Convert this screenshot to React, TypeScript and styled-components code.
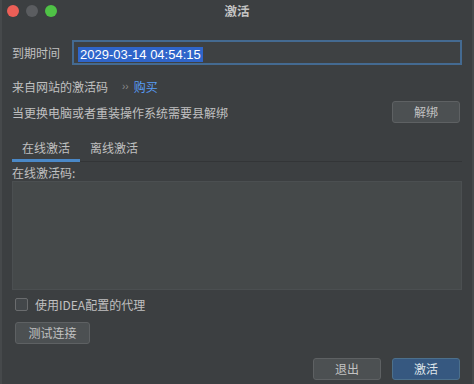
import React from "react";
import styled, { createGlobalStyle } from "styled-components";

const Global = createGlobalStyle`
  html, body { margin: 0; padding: 0; background: #3c3f41; }
  body {
    font-family: "Liberation Sans", "Noto Sans CJK SC", sans-serif;
    -webkit-font-smoothing: antialiased;
  }
  * { box-sizing: border-box; }
`;

const Window = styled.div`
  width: 474px;
  height: 384px;
  background: #3c3f41;
  border-left: 2px solid #46494b;
  border-right: 2px solid #46494b;
  display: flex;
  flex-direction: column;
  color: #c0c0c0;
  font-size: 12px;
  overflow: hidden;
`;

const TitleBar = styled.div`
  position: relative;
  height: 22px;
  display: flex;
  align-items: center;
  justify-content: center;
`;

const Lights = styled.div`
  position: absolute;
  left: 5px;
  top: 5px;
  display: flex;
  gap: 7px;
`;

const Light = styled.span<{ $c: string }>`
  width: 12px;
  height: 12px;
  border-radius: 50%;
  background: ${(p) => p.$c};
`;

const Title = styled.div`
  font-weight: bold;
  font-size: 12.5px;
  color: #c4c4c4;
  font-family: "Noto Sans CJK SC", sans-serif;
  line-height: 22px;
`;

const Content = styled.div`
  flex: 1;
  display: flex;
  flex-direction: column;
  padding: 18px 10px 0 10px;
`;

const Row = styled.div<{ $mt?: number; $h?: number }>`
  display: flex;
  align-items: center;
  margin-top: ${(p) => p.$mt ?? 0}px;
  height: ${(p) => p.$h ?? 20}px;
`;

const Label = styled.span`
  font-family: "Noto Sans CJK SC", sans-serif;
  font-size: 12px;
  color: #c0c0c0;
  white-space: nowrap;
`;

const DateField = styled.div`
  margin-left: 12px;
  flex: 1;
  height: 25px;
  border: 2px solid #446a91;
  background: #3e4143;
  display: flex;
  align-items: center;
  padding: 3px 0 0 4px;
`;

const Selected = styled.span`
  background: #2f65ca;
  color: #ffffff;
  font-family: "Liberation Sans", sans-serif;
  font-size: 13px;
  line-height: 15px;
  padding: 0 2px;
`;

const Chevrons = styled.span`
  margin-left: 14px;
  font-size: 10px;
  color: #8c8c8c;
  font-family: "Liberation Sans", sans-serif;
`;

const Link = styled.span`
  margin-left: 5px;
  font-family: "Noto Sans CJK SC", sans-serif;
  font-size: 12px;
  color: #589df6;
`;

const Spacer = styled.div`
  flex: 1;
`;

const Button = styled.button<{ $primary?: boolean; $w?: number }>`
  width: ${(p) => p.$w ?? 68}px;
  height: 22px;
  margin-right: 2px;
  border-radius: 3px;
  border: 1px solid ${(p) => (p.$primary ? "#4c708c" : "#5e6163")};
  background: ${(p) => (p.$primary ? "#365880" : "#4c5052")};
  color: ${(p) => (p.$primary ? "#dfe4ea" : "#c2c2c2")};
  font-family: "Noto Sans CJK SC", sans-serif;
  font-size: 12px;
  line-height: 20px;
  padding: 0;
`;

const Tabs = styled.div`
  margin-top: 11px;
  height: 28px;
  display: flex;
  align-items: stretch;
  border-bottom: 1px solid #333537;
`;

const Tab = styled.div<{ $active?: boolean }>`
  width: 68px;
  display: flex;
  align-items: center;
  justify-content: center;
  font-family: "Noto Sans CJK SC", sans-serif;
  font-size: 12px;
  color: #c0c0c0;
  border-bottom: 3px solid ${(p) => (p.$active ? "#4a88c7" : "transparent")};
  margin-bottom: -1px;
  padding-top: 1px;
`;

const CodeLabel = styled.div`
  margin-top: 1px;
  height: 18px;
  display: flex;
  align-items: center;
  font-family: "Noto Sans CJK SC", sans-serif;
  font-size: 12px;
  color: #c0c0c0;
`;

const CodeArea = styled.div`
  height: 109px;
  background: #45494a;
  border: 1px solid #4b4f51;
`;

const CheckRow = styled.div`
  margin-top: 6px;
  height: 16px;
  display: flex;
  align-items: center;
  padding-left: 3px;
  gap: 7px;
`;

const Checkbox = styled.span`
  width: 13px;
  height: 13px;
  border: 1px solid #6a6c6e;
  border-radius: 2px;
  background: #43474a;
`;

const TestRow = styled.div`
  margin-top: 10px;
  padding-left: 3px;
  display: flex;
`;

const Footer = styled.div`
  margin-top: 14px;
  display: flex;
  justify-content: flex-end;
  gap: 9px;
`;

export default function App() {
  return (
    <>
      <Global />
      <Window>
        <TitleBar>
          <Lights>
            <Light $c="#ec5f57" />
            <Light $c="#5b5d60" />
            <Light $c="#4fc246" />
          </Lights>
          <Title>激活</Title>
        </TitleBar>
        <Content>
          <Row $h={25}>
            <Label>到期时间</Label>
            <DateField>
              <Selected>2029-03-14 04:54:15</Selected>
            </DateField>
          </Row>
          <Row $mt={11}>
            <Label>来自网站的激活码</Label>
            <Chevrons>››</Chevrons>
            <Link>购买</Link>
          </Row>
          <Row $mt={5} $h={22}>
            <Label>当更换电脑或者重装操作系统需要县解绑</Label>
            <Spacer />
            <Button>解绑</Button>
          </Row>
          <Tabs>
            <Tab $active>在线激活</Tab>
            <Tab>离线激活</Tab>
          </Tabs>
          <CodeLabel>在线激活码:</CodeLabel>
          <CodeArea />
          <CheckRow>
            <Checkbox />
            <Label>使用IDEA配置的代理</Label>
          </CheckRow>
          <TestRow>
            <Button $w={75}>测试连接</Button>
          </TestRow>
          <Footer>
            <Button>退出</Button>
            <Button $primary>激活</Button>
          </Footer>
        </Content>
      </Window>
    </>
  );
}
